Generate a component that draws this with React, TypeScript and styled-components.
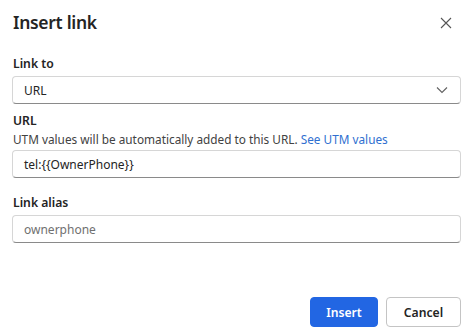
import React from "react";
import styled, { createGlobalStyle } from "styled-components";

const Global = createGlobalStyle`
  html, body { margin: 0; padding: 0; background: #fff; }
  body { font-family: "Noto Sans", "Open Sans", sans-serif; color: #242424; }
  * { box-sizing: border-box; }
`;

const Dialog = styled.div`
  width: 474px;
  height: 335px;
  padding: 0 13px 0 12px;
  display: flex;
  flex-direction: column;
  background: #fff;
`;

const Header = styled.div`
  display: flex;
  align-items: center;
  justify-content: space-between;
  height: 40px;
  margin-top: 2px;
  padding-left: 1px;
`;

const Title = styled.h2`
  margin: 0;
  font-size: 17.5px;
  font-weight: 600;
  letter-spacing: -0.3px;
  line-height: 26px;
  color: #242424;
`;

const CloseButton = styled.button`
  border: none;
  background: transparent;
  padding: 0;
  width: 20px;
  height: 20px;
  display: flex;
  align-items: center;
  justify-content: center;
  margin-right: 5px;
  margin-top: 1px;
  cursor: pointer;
`;

const Field = styled.div<{ $top: number }>`
  display: flex;
  flex-direction: column;
  margin-top: ${(p) => p.$top}px;
`;

const Label = styled.label<{ $gap?: number }>`
  font-size: 12.2px;
  font-weight: 600;
  line-height: 18px;
  padding-left: 1px;
  color: #242424;
  margin-bottom: ${(p) => p.$gap ?? 3}px;
`;

const Help = styled.div`
  font-size: 11.8px;
  line-height: 17px;
  padding-left: 1px;
  color: #424242;
  margin-bottom: 2px;
`;

const HelpLink = styled.a`
  color: #2f6fd0;
  text-decoration: none;
`;

const Box = styled.div`
  height: 28px;
  border: 1px solid #d6d6d6;
  border-bottom-color: #8a8a8a;
  border-radius: 4px;
  display: flex;
  align-items: center;
  justify-content: space-between;
  padding: 0 12px 0 11px;
  font-size: 12px;
  background: #fff;
`;

const Value = styled.span<{ $placeholder?: boolean }>`
  color: ${(p) => (p.$placeholder ? "#707070" : "#242424")};
`;

const Footer = styled.div`
  margin-top: auto;
  margin-bottom: 8px;
  display: flex;
  justify-content: flex-end;
  gap: 8px;
`;

const Button = styled.button<{ $primary?: boolean }>`
  height: 30px;
  min-width: ${(p) => (p.$primary ? 68 : 75)}px;
  padding: 0 12px;
  border-radius: 4px;
  font-family: inherit;
  font-size: 12.2px;
  font-weight: 600;
  border: 1px solid ${(p) => (p.$primary ? "#2266e3" : "#c4c4c4")};
  background: ${(p) => (p.$primary ? "#2266e3" : "#fff")};
  color: ${(p) => (p.$primary ? "#fff" : "#242424")};
`;

export default function App() {
  return (
    <>
      <Global />
      <Dialog>
        <Header>
          <Title>Insert link</Title>
          <CloseButton aria-label="Close">
            <svg width="12" height="12" viewBox="0 0 12 12">
              <path d="M1 1L11 11M11 1L1 11" stroke="#555" strokeWidth="1.1" />
            </svg>
          </CloseButton>
        </Header>
        <Field $top={13}>
          <Label>Link to</Label>
          <Box>
            <Value>URL</Value>
            <svg width="12" height="8" viewBox="0 0 12 8">
              <path d="M1 1.5L6 6.5L11 1.5" stroke="#616161" strokeWidth="1.1" fill="none" />
            </svg>
          </Box>
        </Field>
        <Field $top={8}>
          <Label $gap={1}>URL</Label>
          <Help>
            UTM values will be automatically added to this URL.{" "}
            <HelpLink href="#">See UTM values</HelpLink>
          </Help>
          <Box>
            <Value>tel:{"{{OwnerPhone}}"}</Value>
          </Box>
        </Field>
        <Field $top={16}>
          <Label>Link alias</Label>
          <Box>
            <Value $placeholder>ownerphone</Value>
          </Box>
        </Field>
        <Footer>
          <Button $primary>Insert</Button>
          <Button>Cancel</Button>
        </Footer>
      </Dialog>
    </>
  );
}
